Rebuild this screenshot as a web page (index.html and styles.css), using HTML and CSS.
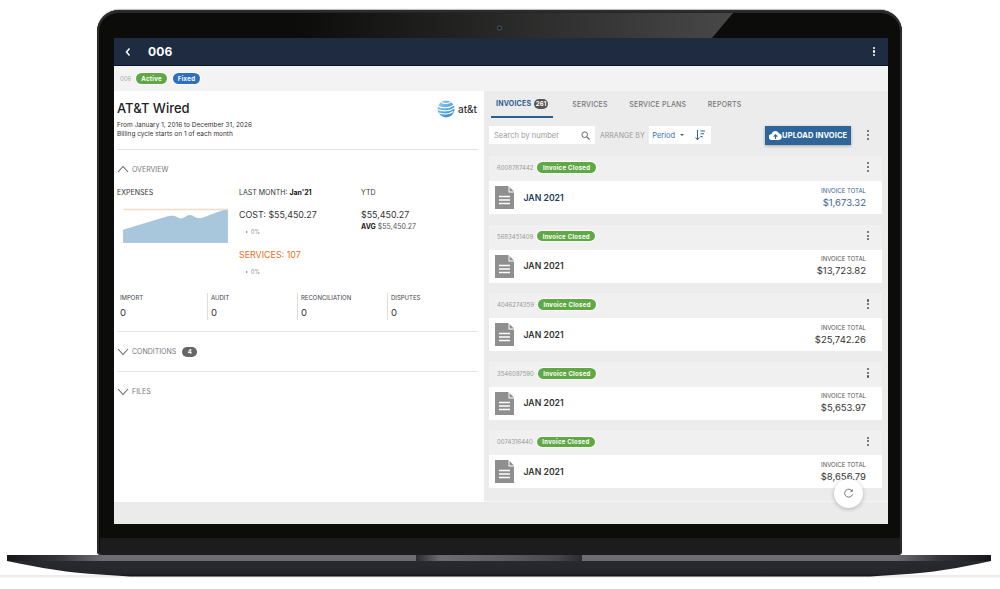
FILE: index.html
```html
<!DOCTYPE html>
<html lang="en">
<head>
<meta charset="utf-8">
<title>AT&amp;T Wired</title>
<link rel="stylesheet" href="styles.css">
</head>
<body>
<div class="device">
  <div class="lid">
    <svg class="glare" width="805" height="28" viewBox="0 0 805 28"><defs><linearGradient id="gl" x1="0" x2="1" y1="0" y2="0"><stop offset="0" stop-color="#0c0c0b"/><stop offset="1" stop-color="#484848"/></linearGradient></defs><polygon points="200,3 636,3 615,28 200,28" fill="url(#gl)"/><circle cx="402.500" cy="18" r="2.800" fill="#3d424e"/><circle cx="402.500" cy="18" r="1.100" fill="#08080a"/></svg>
    <div class="screen">
      <header class="topbar">
        <svg class="back" width="8" height="10" viewBox="0 0 8 10"><path d="M5.500 1.500 2.500 5 5.500 8.500" fill="none" stroke="#fff" stroke-width="1.500"/></svg>
        <span class="topbar-title">006</span>
        <span class="kebab kebab-light"><i></i><i></i><i></i></span>
      </header>
      <div class="subbar">
        <span class="sub-id">006</span>
        <span class="pill pill-green">Active</span>
        <span class="pill pill-blue">Fixed</span>
      </div>
      <div class="panels">
        <section class="left">
          <div class="title-row">
            <div>
              <h1>AT&amp;T Wired</h1>
              <p class="meta">From January 1, 2016 to December 31, 2026</p>
              <p class="meta">Billing cycle starts on 1 of each month</p>
            </div>
            <div class="logo">
              <svg width="18" height="18" viewBox="0 0 18 18"><defs><linearGradient id="gb" x1="0" x2="1" y1="0" y2="1"><stop offset="0" stop-color="#a3d8f2"/><stop offset="1" stop-color="#1d7fc4"/></linearGradient></defs><circle cx="9" cy="9" r="8.500" fill="url(#gb)"/><path d="M1 6c4 2.500 11 2.500 16-1M.6 9.500c5 2 12 2 16.800-1.500M1.800 13c5 1.500 10.500 1.500 14.500-1.500M4.500 2.500c3 1.500 7 1 9-.5" fill="none" stroke="#fff" stroke-width="1.100"/></svg>
              <span>at&amp;t</span>
            </div>
          </div>
          <div class="section-head first">
            <svg class="chev" width="12" height="8" viewBox="0 0 12 8"><path d="M1 7 6 1.500 11 7" fill="none" stroke="#666" stroke-width="1.100"/></svg>
            <span>OVERVIEW</span>
          </div>
          <div class="stats">
            <div class="stat-chart">
              <div class="label">EXPENSES</div>
              <svg class="chart" width="105" height="35" viewBox="0 0 105 35"><path d="M.5 22 42 9.500C47 8 50 7.500 53 9S57 11.500 60 10.500 63 7.500 67 7.500 71 10.500 76 10.500 84 8 104.500 1V34.500H.5Z" fill="#a8c6dc" stroke="#9dbdd6" stroke-width=".7"/><line x1=".5" y1="1.500" x2="104.500" y2="1.500" stroke="#f6dcc4" stroke-width="1.300"/></svg>
            </div>
            <div class="stat-month">
              <div class="label">LAST MONTH: <b>Jan'21</b></div>
              <div class="cost">COST: $55,450.27</div>
              <div class="delta"><i class="tri"></i>0%</div>
              <div class="cost orange">SERVICES: 107</div>
              <div class="delta"><i class="tri"></i>0%</div>
            </div>
            <div class="stat-ytd">
              <div class="label">YTD</div>
              <div class="cost">$55,450.27</div>
              <div class="avg"><b>AVG</b> $55,450.27</div>
            </div>
          </div>
          <div class="counters">
            <div class="counter"><div class="c-label">IMPORT</div><div class="c-val">0</div></div>
            <div class="counter rule"><div class="c-label">AUDIT</div><div class="c-val">0</div></div>
            <div class="counter rule"><div class="c-label">RECONCILIATION</div><div class="c-val">0</div></div>
            <div class="counter rule"><div class="c-label">DISPUTES</div><div class="c-val">0</div></div>
          </div>
          <div class="section-head line">
            <svg class="chev" width="12" height="8" viewBox="0 0 12 8"><path d="M1 1 6 6.500 11 1" fill="none" stroke="#666" stroke-width="1.100"/></svg>
            <span>CONDITIONS</span><em class="count">4</em>
          </div>
          <div class="section-head line">
            <svg class="chev" width="12" height="8" viewBox="0 0 12 8"><path d="M1 1 6 6.500 11 1" fill="none" stroke="#666" stroke-width="1.100"/></svg>
            <span>FILES</span>
          </div>
        </section>
        <section class="right">
          <nav class="tabs">
            <a class="tab active">INVOICES <em class="tab-count">261</em></a>
            <a class="tab">SERVICES</a>
            <a class="tab">SERVICE PLANS</a>
            <a class="tab">REPORTS</a>
          </nav>
          <div class="tools">
            <div class="search"><span>Search by number</span>
              <svg width="9" height="9" viewBox="0 0 9 9"><circle cx="3.700" cy="3.700" r="2.800" fill="none" stroke="#666" stroke-width="1"/><path d="M5.800 5.800 8.500 8.500" stroke="#666" stroke-width="1.100"/></svg>
            </div>
            <span class="arrange">ARRANGE BY</span>
            <div class="period"><span>Period</span><i class="caret"></i>
              <svg width="10" height="11" viewBox="0 0 10 11"><path d="M2.500 0V9.500M.6 7.500 2.500 9.800 4.400 7.500" fill="none" stroke="#2f6598" stroke-width="1"/><path d="M5.500 1H10M5.500 3.800H9M5.500 6.600H7.500" stroke="#2f6598" stroke-width="1.100"/></svg>
            </div>
            <button class="upload">
              <svg width="13" height="10" viewBox="0 0 13 10"><path d="M3 10A3 3 0 0 1 2.600 4 4 4 0 0 1 10.200 3.500 3.300 3.300 0 0 1 10 10Z" fill="#fff"/><path d="M6.500 9V5.200M4.700 6.700 6.500 4.800 8.300 6.700" fill="none" stroke="#2f6598" stroke-width="1.200"/></svg>
              UPLOAD INVOICE
            </button>
            <span class="kebab"><i></i><i></i><i></i></span>
          </div>
          <div class="list">
            <article class="card">
              <div class="card-head"><span class="inv-id">6008787442</span><span class="pill pill-green wide">Invoice Closed</span><span class="kebab"><i></i><i></i><i></i></span></div>
              <div class="card-body">
                <svg class="doc" width="19" height="23" viewBox="0 0 19 23"><path d="M0 0H13.500V6.500H19V23H0Z" fill="#8f8f8f"/><path d="M14.500 1 19 5.500H14.500Z" fill="#8f8f8f"/><path d="M4 10.500H15M4 14H15M4 17.500H15" stroke="#fff" stroke-width="1.300"/></svg>
                <div class="period-name navy">JAN 2021</div>
                <div class="total"><div class="t-label blue">INVOICE TOTAL</div><div class="t-val blue">$1,673.32</div></div>
              </div>
            </article>
            <article class="card">
              <div class="card-head"><span class="inv-id">5683451409</span><span class="pill pill-green wide">Invoice Closed</span><span class="kebab"><i></i><i></i><i></i></span></div>
              <div class="card-body">
                <svg class="doc" width="19" height="23" viewBox="0 0 19 23"><path d="M0 0H13.500V6.500H19V23H0Z" fill="#8f8f8f"/><path d="M14.500 1 19 5.500H14.500Z" fill="#8f8f8f"/><path d="M4 10.500H15M4 14H15M4 17.500H15" stroke="#fff" stroke-width="1.300"/></svg>
                <div class="period-name">JAN 2021</div>
                <div class="total"><div class="t-label">INVOICE TOTAL</div><div class="t-val">$13,723.82</div></div>
              </div>
            </article>
            <article class="card">
              <div class="card-head"><span class="inv-id">4046274359</span><span class="pill pill-green wide">Invoice Closed</span><span class="kebab"><i></i><i></i><i></i></span></div>
              <div class="card-body">
                <svg class="doc" width="19" height="23" viewBox="0 0 19 23"><path d="M0 0H13.500V6.500H19V23H0Z" fill="#8f8f8f"/><path d="M14.500 1 19 5.500H14.500Z" fill="#8f8f8f"/><path d="M4 10.500H15M4 14H15M4 17.500H15" stroke="#fff" stroke-width="1.300"/></svg>
                <div class="period-name">JAN 2021</div>
                <div class="total"><div class="t-label">INVOICE TOTAL</div><div class="t-val">$25,742.26</div></div>
              </div>
            </article>
            <article class="card">
              <div class="card-head"><span class="inv-id">3546097590</span><span class="pill pill-green wide">Invoice Closed</span><span class="kebab"><i></i><i></i><i></i></span></div>
              <div class="card-body">
                <svg class="doc" width="19" height="23" viewBox="0 0 19 23"><path d="M0 0H13.500V6.500H19V23H0Z" fill="#8f8f8f"/><path d="M14.500 1 19 5.500H14.500Z" fill="#8f8f8f"/><path d="M4 10.500H15M4 14H15M4 17.500H15" stroke="#fff" stroke-width="1.300"/></svg>
                <div class="period-name">JAN 2021</div>
                <div class="total"><div class="t-label">INVOICE TOTAL</div><div class="t-val">$5,653.97</div></div>
              </div>
            </article>
            <article class="card">
              <div class="card-head"><span class="inv-id">0074316440</span><span class="pill pill-green wide">Invoice Closed</span><span class="kebab"><i></i><i></i><i></i></span></div>
              <div class="card-body">
                <svg class="doc" width="19" height="23" viewBox="0 0 19 23"><path d="M0 0H13.500V6.500H19V23H0Z" fill="#8f8f8f"/><path d="M14.500 1 19 5.500H14.500Z" fill="#8f8f8f"/><path d="M4 10.500H15M4 14H15M4 17.500H15" stroke="#fff" stroke-width="1.300"/></svg>
                <div class="period-name">JAN 2021</div>
                <div class="total"><div class="t-label">INVOICE TOTAL</div><div class="t-val">$8,656.79</div></div>
              </div>
            </article>
          </div>
          <button class="refresh"><svg width="11" height="11" viewBox="0 0 11 11"><path d="M9.200 3.200A4 4 0 1 0 9.500 6.500" fill="none" stroke="#777" stroke-width="1"/><path d="M9.800 .8V3.800H6.800Z" fill="#777"/></svg></button>
        </section>
      </div>
      <div class="footer-band"></div>
    </div>
    <div class="chin"></div>
  </div>
  <svg class="base" width="1000" height="34" viewBox="0 0 1000 34">
    <defs>
      <linearGradient id="stripL" x1="0" x2="1" y1="0" y2="0"><stop offset="0" stop-color="#17171a"/><stop offset=".55" stop-color="#35353a"/><stop offset="1" stop-color="#6c6c72"/></linearGradient>
      <linearGradient id="stripR" x1="1" x2="0" y1="0" y2="0"><stop offset="0" stop-color="#17171a"/><stop offset=".55" stop-color="#35353a"/><stop offset="1" stop-color="#6c6c72"/></linearGradient>
      <linearGradient id="body" x1="0" x2="0" y1="0" y2="1"><stop offset="0" stop-color="#2a2b30"/><stop offset=".85" stop-color="#25262b"/><stop offset="1" stop-color="#141417"/></linearGradient>
      <linearGradient id="notch" x1="0" x2="1"><stop offset="0" stop-color="#2c2c30"/><stop offset=".15" stop-color="#6c6c72"/><stop offset=".5" stop-color="#5e5e63"/><stop offset=".85" stop-color="#48484c"/><stop offset="1" stop-color="#2c2c30"/></linearGradient>
    </defs>
    <rect x="0" y="20" width="1000" height="2.500" fill="#ececec"/>
    <path d="M7 0H991V6C960 13 930 18 900 19.500L870 21.500H130L100 19.500C70 18 40 13 7 6Z" fill="url(#body)"/>
    <rect x="7" y="0" width="95" height="6" fill="url(#stripL)"/>
    <rect x="102" y="0" width="314" height="6" fill="#6c6c72"/>
    <rect x="416" y="0" width="166" height="6" fill="url(#notch)"/>
    <rect x="582" y="0" width="314" height="6" fill="#6c6c72"/>
    <rect x="896" y="0" width="95" height="6" fill="url(#stripR)"/>
  </svg>
</div>
</body>
</html>
```

FILE: styles.css
```css
* { box-sizing: border-box; }
html, body { margin: 0; padding: 0; background: #fff; overflow: hidden; }
body { width: 1000px; height: 589px; font-family: "Inter", "Liberation Sans", sans-serif; color: #222; }
p, h1 { margin: 0; }
em, i { font-style: normal; }
.device { padding-top: 10px; display: flex; flex-direction: column; }
.lid {
  width: 805px; height: 545px; margin-left: 97px; position: relative;
  background: #0c0c0b; border-radius: 22px 22px 4px 4px;
  padding: 28px 14px 0 17px;
  box-shadow: inset 0 0 0 2px #2c2c2e, inset 0 3px 0 #262626, 0 -1px 1px #bbb;
  display: flex; flex-direction: column;
}
.glare { position: absolute; left: 0; top: 0; }
.screen { position: relative; width: 774px; height: 486px; background: #ececec; display: flex; flex-direction: column; }
.chin { height: 17px; margin: 14px -12px 0 -14px; background: #1c1c1c; border-radius: 0 0 4px 4px; }
.base { display: block; }

.topbar { height: 28px; flex: none; background: #1f2b40; border-bottom: 1px solid #07132a; display: flex; align-items: center; padding: 0 10px; }
.back { margin-right: 16px; }
.topbar-title { font-size: 12px; font-weight: 700; color: #fff; letter-spacing: .2px; }
.kebab { display: inline-flex; flex-direction: column; gap: 1.500px; width: 3px; flex: none; }
.kebab i { width: 2.200px; height: 2.200px; border-radius: 50%; background: #555; display: block; }
.kebab-light { margin-left: auto; margin-right: 2px; }
.kebab-light i { background: #fff; }

.subbar { height: 25px; flex: none; background: #f3f3f3; display: flex; align-items: center; padding: 0 6px; }
.sub-id { font-size: 6px; color: #a8a8a8; margin-right: 5px; }
.pill { font-size: 6px; font-weight: 700; color: #fff; border-radius: 6px; height: 10.500px; display: inline-flex; align-items: center; padding: 0 5px; letter-spacing: .3px; box-shadow: 0 0 0 1px #fff; }
.pill-green { background: #5fa844; }
.pill-blue { background: #2f6fc0; margin-left: 6px; }
.pill.wide { padding: 0 5.500px; }

.panels { flex: none; height: 411px; display: flex; position: relative; }
.left { width: 370px; flex: none; background: #fff; padding: 0 6px 0 3px; display: flex; flex-direction: column; }
.title-row { display: flex; justify-content: space-between; flex: none; height: 59px; padding-top: 9px; border-bottom: 1px solid #e4e4e4; }
h1 { font-size: 13px; font-weight: 500; color: #222; line-height: 16px; margin-bottom: 5px; }
.meta { font-size: 6.500px; line-height: 8.500px; color: #333; }
.logo { display: flex; align-items: center; gap: 3px; height: 18px; margin-right: 1px; }
.logo span { font-size: 10px; font-weight: 500; color: #333; }

.section-head { display: flex; align-items: center; flex: none; font-size: 7px; color: #777; gap: 3px; }
.section-head.first { height: 38px; }
.section-head.line { height: 40px; border-top: 1px solid #e4e4e4; }
.count { background: #666; color: #fff; font-size: 6px; font-weight: 700; height: 10px; width: 15px; border-radius: 5px; display: inline-flex; align-items: center; justify-content: center; margin-left: 3px; }

.stats { display: grid; grid-template-columns: 122px 122px 1fr; flex: none; height: 105px; }
.label { font-size: 7px; color: #333; line-height: 9px; }
.label b { color: #111; font-weight: 700; }
.chart { display: block; margin: 11px 0 0 6px; }
.cost { font-size: 8.900px; line-height: 12px; color: #333; margin-top: 12px; }
.cost.orange { color: #e9711c; margin-top: 13px; }
.delta { font-size: 5.500px; color: #888; margin: 7px 0 0 7px; line-height: 8px; display: flex; align-items: center; gap: 3px; }
.tri { width: 0; height: 0; border-left: 2.500px solid #777; border-top: 1.500px solid transparent; border-bottom: 1.500px solid transparent; }
.avg { font-size: 7px; color: #555; line-height: 9px; margin-top: 1px; }
.avg b { color: #222; }

.counters { display: grid; grid-template-columns: 90px 90px 90px 1fr; flex: none; height: 38px; }
.counter { padding-left: 3px; height: 27px; }
.counter.rule { border-left: 1px solid #ddd; }
.c-label { font-size: 6px; color: #444; line-height: 9px; }
.c-val { font-size: 9.500px; color: #333; line-height: 12px; margin-top: 5px; }

.right { flex: 1; min-width: 0; background: #ececec; padding: 0 6px 0 5px; position: relative; border-bottom: 1px solid #f4f4f4; }
.tabs { display: flex; height: 27px; padding-left: 2px; }
.tab { font-size: 7px; font-weight: 500; color: #777; height: 27px; display: flex; align-items: center; gap: 3px; letter-spacing: .2px; margin-right: 21.500px; }
.tab.active { color: #2a5d91; border-bottom: 2px solid #2a5d91; padding: 0 5px; margin-right: 19px; font-weight: 700; }
.tab-count { background: #555; color: #fff; font-size: 6px; width: 14px; height: 10px; border-radius: 5px; display: inline-flex; align-items: center; justify-content: center; }

.tools { display: flex; align-items: center; height: 34px; }
.search { width: 106px; height: 18px; background: #fff; display: flex; align-items: center; justify-content: space-between; padding: 0 5px; font-size: 7.500px; color: #9a9a9a; }
.arrange { font-size: 7px; color: #999; margin: 0 4.500px 0 5px; }
.period { width: 62px; height: 18px; background: #fff; display: flex; align-items: center; padding: 0 3px; font-size: 7.500px; color: #3a74ad; }
.caret { width: 0; height: 0; border: 2.500px solid transparent; border-top: 2.500px solid #2f6598; border-bottom: 0; margin: 0 11px 0 5px; }
.upload { margin-left: 54px; width: 86px; height: 19px; border: 0; background: #2f6598; color: #fff; font: 700 7.500px "Inter", sans-serif; display: flex; align-items: center; justify-content: center; padding: 0; box-shadow: 0 1px 3px rgba(0,0,0,.3); letter-spacing: .1px; }
.tools > .kebab { margin-left: 16px; }

.list { display: flex; flex-direction: column; gap: 10.600px; margin-top: 4px; }
.card { height: 58px; background: #fff; display: flex; flex-direction: column; }
.card-head { height: 25px; flex: none; background: #f0f0f0; display: flex; align-items: center; padding: 0 12px 2px 8px; }
.inv-id { font-size: 6px; color: #999; margin-right: 4px; }
.card-head .kebab { margin-left: auto; margin-top: -1px; }
.card-body { flex: 1; display: flex; align-items: center; padding: 0 16px 0 5.500px; }
.doc { flex: none; margin-right: 10px; }
.period-name { font-size: 8.700px; font-weight: 600; color: #333; }
.period-name.navy { color: #1f3a5c; }
.total { margin-left: auto; text-align: right; }
.t-label { font-size: 6px; color: #555; line-height: 8px; }
.t-val { font-size: 9.500px; color: #333; line-height: 13px; margin-top: 1px; }
.t-label.blue, .t-val.blue { color: #3a6592; }

.refresh { position: absolute; left: 349.500px; bottom: -6.500px; width: 29px; height: 29px; border-radius: 50%; border: 0; background: #fff; box-shadow: 0 1px 4px rgba(0,0,0,.25); display: flex; align-items: center; justify-content: center; padding: 0; }
.footer-band { flex: 1; background: #ebebeb; }
```
